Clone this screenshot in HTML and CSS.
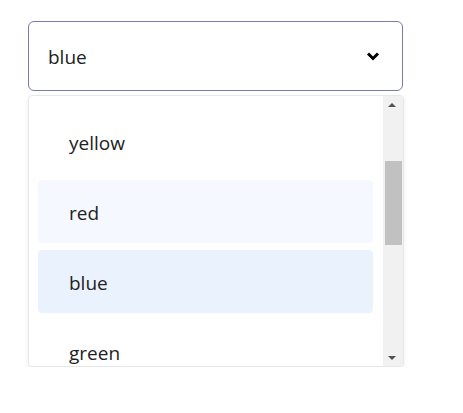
FILE: index.html
```html
<!DOCTYPE html>
<html lang="en">
<head>
<meta charset="utf-8">
<title>Select</title>
<link rel="stylesheet" href="styles.css">
</head>
<body>
<div class="wrap">
  <div class="select">
    <span class="select-value">blue</span>
    <svg class="chevron" width="14" height="10" viewBox="0 0 14 10" aria-hidden="true">
      <path d="M2 2.5 L7 7.5 L12 2.5" fill="none" stroke="#000" stroke-width="3" stroke-linejoin="miter"/>
    </svg>
  </div>
  <div class="dropdown">
    <ul class="options">
      <li class="option">yellow</li>
      <li class="option hover">red</li>
      <li class="option selected">blue</li>
      <li class="option">green</li>
    </ul>
    <div class="scrollbar">
      <div class="sb-btn"><span class="tri-up"></span></div>
      <div class="sb-track"><div class="sb-thumb"></div></div>
      <div class="sb-btn"><span class="tri-down"></span></div>
    </div>
  </div>
</div>
</body>
</html>
```

FILE: styles.css
```css
* { box-sizing: border-box; }
html, body { margin: 0; padding: 0; background: #fff; }
body {
  font-family: "Open Sans", "Noto Sans", sans-serif;
  color: #222;
}
.wrap {
  padding: 21px 0 0 28px;
  width: 404px;
}
.select {
  width: 375px;
  height: 70px;
  border: 1px solid #7b7bab;
  border-radius: 6px;
  display: flex;
  align-items: center;
  justify-content: space-between;
  padding: 0 22px 0 19px;
  font-size: 19px;
}
.select-value { line-height: 1; margin-top: 2px; }
.chevron { display: block; margin-top: -1px; }
.dropdown {
  margin-top: 4px;
  width: 376px;
  height: 272px;
  border: 1px solid #e6e8ee;
  border-radius: 4px;
  box-shadow: 0 2px 5px rgba(40, 50, 80, 0.08);
  display: flex;
  overflow: hidden;
  background: #fff;
}
.options {
  flex: 1;
  list-style: none;
  margin: 0;
  padding: 14px 10px 0 9px;
  overflow: hidden;
  display: flex;
  flex-direction: column;
  gap: 7px;
}
.option {
  flex: none;
  height: 63px;
  display: flex;
  align-items: center;
  padding-left: 31px;
  padding-top: 2px;
  border-radius: 4px;
  font-size: 19px;
  color: #222;
}
.option.hover { background: #f5f8ff; }
.option.selected { background: #eaf2fe; }
.scrollbar {
  width: 20px;
  flex: none;
  background: #f1f1f1;
  display: flex;
  flex-direction: column;
}
.sb-btn {
  height: 17px;
  display: flex;
  align-items: center;
  justify-content: center;
  padding-right: 2px;
}
.tri-up, .tri-down {
  width: 0;
  height: 0;
  border-left: 4px solid transparent;
  border-right: 4px solid transparent;
}
.tri-up { border-bottom: 4px solid #505050; }
.tri-down { border-top: 4px solid #505050; }
.sb-track { flex: 1; }
.sb-thumb {
  margin: 48px 0 0 2px;
  width: 17px;
  height: 84px;
  background: #c1c1c1;
}
```
